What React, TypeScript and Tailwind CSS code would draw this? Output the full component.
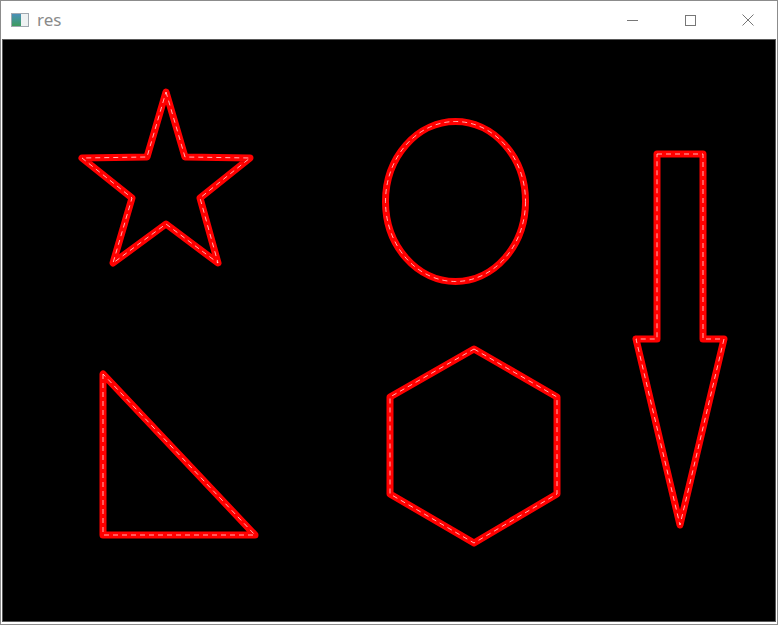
import React from 'react';

const star = '166,92 185,157 250,158 200,198 218,263 166,224 113,263 132,198 82,158 147,157';
const tri = '103,374 103,535 255,535';
const hex = '474,349 557,397 557,494 474,543 390,494 390,397';
const arrow = '657,154 703,154 703,339 724,339 680,525 636,339 657,339';

function Contour({ points }: { points: string }) {
  return (
    <g>
      <polygon points={points} fill="none" stroke="#ff0000" strokeWidth={7} strokeLinejoin="round" />
      <polygon points={points} fill="none" stroke="#ffffff" strokeWidth={1} strokeDasharray="5 4" opacity={0.7} />
    </g>
  );
}

export default function App() {
  return (
    <div className="w-[778px] h-[625px] bg-white border border-[#8c8c8c] flex flex-col" style={{ fontFamily: '"Noto Sans", "Liberation Sans", sans-serif' }}>
      <div className="h-[38px] flex items-center shrink-0">
        <div className="ml-[10px] w-[18px] h-[14px] border border-[#a0a8b0] flex">
          <div className="w-[9px] h-full bg-gradient-to-b from-[#4a8fb8] to-[#3f9a5c]" />
          <div className="flex-1 bg-[#eef2f3]" />
        </div>
        <span className="ml-[8px] text-[17px] text-[#8a8a8a] leading-none mb-[2px]">res</span>
        <div className="ml-auto flex items-center h-full">
          <div className="w-[58px] h-full flex items-center justify-center">
            <div className="w-[11px] h-px bg-[#777]" />
          </div>
          <div className="w-[58px] h-full flex items-center justify-center">
            <div className="w-[11px] h-[11px] border border-[#777]" />
          </div>
          <div className="w-[58px] h-full flex items-center justify-center">
            <svg width="12" height="12" viewBox="0 0 12 12">
              <path d="M0.5 0.5 L11.5 11.5 M11.5 0.5 L0.5 11.5" stroke="#777" strokeWidth="1" fill="none" />
            </svg>
          </div>
        </div>
      </div>
      <div className="flex-1 mx-[1px] mb-[2px] border border-[#5a5a5a] bg-black overflow-hidden">
        <svg width="772" height="582" viewBox="3 40 772 582" className="block">
          <Contour points={star} />
          <ellipse cx={455.5} cy={201.5} rx={70} ry={80} fill="none" stroke="#ff0000" strokeWidth={7} />
          <ellipse cx={455.5} cy={201.5} rx={70} ry={80} fill="none" stroke="#ffffff" strokeWidth={1} strokeDasharray="5 4" opacity={0.7} />
          <Contour points={arrow} />
          <Contour points={tri} />
          <Contour points={hex} />
        </svg>
      </div>
    </div>
  );
}
